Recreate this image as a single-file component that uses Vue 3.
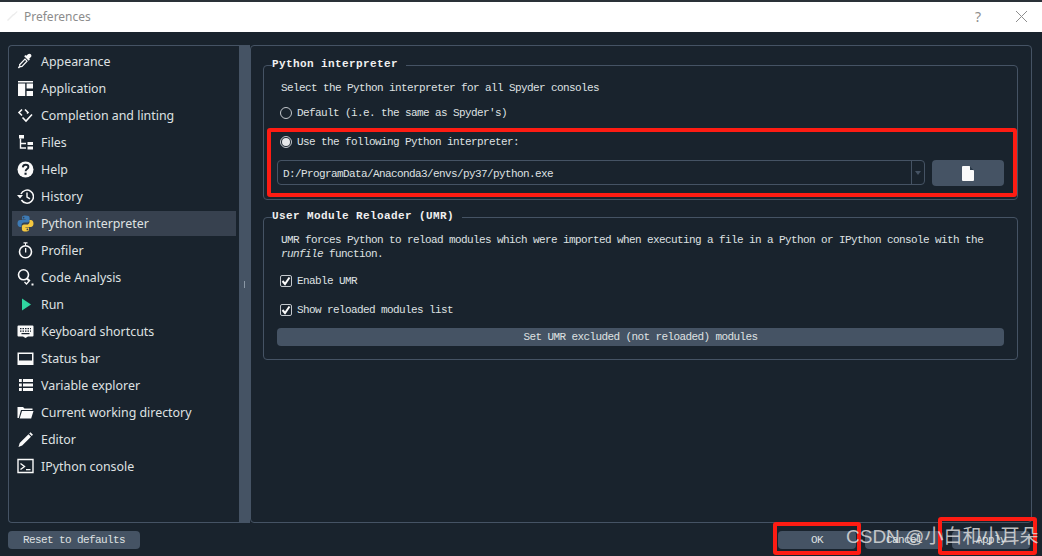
<script setup>
const W = '#fafafa'
const D = '#19232d'
const items = [
  { label: 'Appearance', icon: [
    { d: 'M11 1.200c.8-.8 2-.7 2.800.1s.9 2 .1 2.800l-1.700 1.600.7.8-1.200 1.200-4.500-4.500 1.200-1.200.8.7z', fill: W },
    { d: 'M8 6.200 10 8.200 5 13.400 3 13.800 2.600 11.800z', fill: 'none', stroke: W, sw: 1.2 },
    { d: 'M2.800 13.200 1.400 15', fill: 'none', stroke: W, sw: 1.4 }
  ] },
  { label: 'Application', icon: [
    { d: 'M1 1h15v1.400H1zM1 3.600h7.200V16H1zM9.600 3.600H16v5H9.600zM9.600 11H16v5H9.600z', fill: W }
  ] },
  { label: 'Completion and linting', icon: [
    { d: 'M5 2.500 2 5.500l3 3M8 2.500l3 3-1 1', fill: 'none', stroke: W, sw: 1.600 },
    { d: 'M5.500 10.500 9 14l6-6.500', fill: 'none', stroke: W, sw: 1.600 }
  ] },
  { label: 'Files', icon: [
    { d: 'M2 1h5v3.600H2zM10.500 8h5.500v3H10.500zM10.500 12.500h5.500v3h-5.500z', fill: W },
    { d: 'M3.500 4.500V14H9M3.500 9.500H9', fill: 'none', stroke: W, sw: 1.400 }
  ] },
  { label: 'Help', icon: [
    { d: 'M8.500 .5a8 8 0 1 0 0 16 8 8 0 0 0 0-16z', fill: W },
    { d: 'M5.800 6.300c.2-1.700 1.300-2.500 2.800-2.500s2.800.9 2.800 2.300c0 2-2.800 2-2.800 4.100', fill: 'none', stroke: D, sw: 1.900 },
    { d: 'M7.500 11.700h2.100v2.100H7.500z', fill: D }
  ] },
  { label: 'History', icon: [
    { d: 'M4 6a6.500 6.500 0 1 1 .4 6', fill: 'none', stroke: W, sw: 1.500 },
    { d: 'M0 7.500h6L3 11z', fill: W, tr: 'translate(0 -.5)' },
    { d: 'M10 4.500V9l3 1.800', fill: 'none', stroke: W, sw: 1.400 }
  ] },
  { label: 'Python interpreter', active: true, icon: [
    { d: 'M8.400 .5C5 .5 5 2 5 2.800V4.500h3.600V5H3.200C1.600 5 .5 6.200.5 8.400c0 2.300 1.100 3.500 2.600 3.500h1.400V10c0-1.500 1.200-2.600 2.600-2.600h3.400c1.200 0 2.100-1 2.100-2.200V2.800C12.600 1.300 11.300.5 8.400.5zM6.600 1.700a.8.8 0 1 1 0 1.700.8.8 0 0 1 0-1.700z', fill: '#3d7ab4' },
    { d: 'M8.600 16.500c3.400 0 3.400-1.500 3.400-2.300v-1.700H8.400V12h5.400c1.600 0 2.700-1.200 2.700-3.400 0-2.300-1.100-3.500-2.600-3.500h-1.400V7c0 1.500-1.200 2.600-2.600 2.600H7c-1.200 0-2.100 1-2.100 2.200v2.400c0 1.500 1.300 2.300 3.700 2.300zm1.800-1.200a.8.8 0 1 1 0-1.700.8.8 0 0 1 0 1.700z', fill: '#f5c840' }
  ] },
  { label: 'Profiler', icon: [
    { d: 'M8.500 15.800a6 6 0 1 0 0-12 6 6 0 0 0 0 12z', fill: 'none', stroke: W, sw: 1.600 },
    { d: 'M6.500 .3h4v1.300h-4zM8 1.500h1v2H8zM8 6h1.300v4.500H8z', fill: W }
  ] },
  { label: 'Code Analysis', icon: [
    { d: 'M6.500 .8a5 5 0 1 0 0 10 5 5 0 0 0 0-10z', fill: 'none', stroke: W, sw: 1.600 },
    { d: 'M10 9.500l2 2', fill: 'none', stroke: W, sw: 2 },
    { d: 'M7.500 13l2 2 3.500-4', fill: 'none', stroke: W, sw: 1.300 },
    { d: 'M14.500 14.500h2v2h-2z', fill: W }
  ] },
  { label: 'Run', icon: [
    { d: 'M5 2.500 14 8.500 5 14.500z', fill: '#2fd6a0' }
  ] },
  { label: 'Keyboard shortcuts', icon: [
    { d: 'M1.500 2.500h14a1 1 0 0 1 1 1v9a1 1 0 0 1-1 1H11l-2.500 1.500L6 13.500H1.500a1 1 0 0 1-1-1v-9a1 1 0 0 1 1-1z', fill: W },
    { d: 'M3 5h1.500v1.300H3zM5.500 5H7v1.300H5.500zM8 5h1.500v1.300H8zM10.500 5H12v1.300h-1.500zM13 5h1v1.300h-1zM3 7.500h1.500v1.300H3zM5.500 7.500H7v1.300H5.500zM8 7.500h1.500v1.300H8zM10.500 7.500H12v1.300h-1.500zM13 7.500h1v1.300h-1zM4.500 10h8v1.300h-8z', fill: D }
  ] },
  { label: 'Status bar', icon: [
    { d: 'M.5 2.500h16v12.500H.5zM2 4v6.500h13V4z', fill: W, rule: 'evenodd' }
  ] },
  { label: 'Variable explorer', icon: [
    { d: 'M2 2h2.800v3H2zM6 2h10v3H6zM2 6.500h2.800v3H2zM6 6.500h10v3H6zM2 11h2.800v3H2zM6 11h10v3H6z', fill: W }
  ] },
  { label: 'Current working directory', icon: [
    { d: 'M.5 3h5.500l1.500 1.500h8V6H4L1.800 14H.5z', fill: W },
    { d: 'M5 7h11.500l-2.300 7.500H2.700z', fill: W }
  ] },
  { label: 'Editor', icon: [
    { d: 'M13.500 1.200 16 3.700 14.700 5 12.200 2.500zM11.500 3.200 14 5.700 5.200 14.500 1.500 16 2.700 12z', fill: W }
  ] },
  { label: 'IPython console', icon: [
    { d: 'M1 1.500h15v13H1z', fill: 'none', stroke: W, sw: 1.400 },
    { d: 'M3.500 5.500 7.500 8.500 3.500 11.500', fill: 'none', stroke: W, sw: 1.400 },
    { d: 'M9 11h4.500v1.300H9z', fill: W }
  ] }
]
</script>

<template>
  <div class="window">
    <div class="topline"></div>
    <header class="titlebar">
      <div class="title-left">
        <svg class="title-icon" width="12" height="12" viewBox="0 0 12 12"><path d="M11 1 7 4.500 8 5.500 11.500 2zM7 4 1 10l1 1 6-6z" fill="#ececec" /></svg>
        <span>Preferences</span>
      </div>
      <div class="title-right">
        <span class="help">?</span>
        <svg width="13" height="13" viewBox="0 0 13 13"><path d="M1 1 12 12M12 1 1 12" stroke="#8e8e8e" stroke-width="1" fill="none" /></svg>
      </div>
    </header>

    <div class="main">
      <nav class="sidebar">
        <div v-for="item in items" :key="item.label" class="row" :class="{ active: item.active }">
          <svg class="row-icon" width="17" height="17" viewBox="0 0 17 17">
            <path
              v-for="(p, i) in item.icon"
              :key="i"
              :d="p.d"
              :fill="p.fill"
              :fill-rule="p.rule"
              :stroke="p.stroke"
              :stroke-width="p.sw"
              :transform="p.tr"
            />
          </svg>
          <span class="row-label">{{ item.label }}</span>
        </div>
      </nav>

      <div class="splitter"><i></i></div>

      <section class="panel">
        <fieldset class="group group-one">
          <legend>Python interpreter</legend>
          <p class="desc">Select the Python interpreter for all Spyder consoles</p>
          <label class="opt first"><span class="radio"></span>Default (i.e. the same as Spyder's)</label>
          <label class="opt second"><span class="radio on"></span>Use the following Python interpreter:</label>
          <div class="combo-row">
            <div class="combo">
              <span class="combo-text">D:/ProgramData/Anaconda3/envs/py37/python.exe</span>
              <span class="combo-arrow"><i></i></span>
            </div>
            <button class="btn file-btn">
              <svg width="12" height="15" viewBox="0 0 12 15"><path d="M1 0h6.500L12 4.500V14a1 1 0 0 1-1 1H1a1 1 0 0 1-1-1V1a1 1 0 0 1 1-1z" fill="#fafafa" /><path d="M8 0 12 4H8z" fill="#2b3a4a" /></svg>
            </button>
          </div>
        </fieldset>

        <fieldset class="group group-two">
          <legend>User Module Reloader (UMR)</legend>
          <p class="desc umr">UMR forces Python to reload modules which were imported when executing a file in a Python or IPython console with the<br /><em>runfile</em> function.</p>
          <label class="opt check-first"><span class="check">
            <svg width="10" height="10" viewBox="0 0 10 10"><path d="M1.500 5 4 8 8.500 1.500" fill="none" stroke="#fafafa" stroke-width="2" /></svg>
          </span>Enable UMR</label>
          <label class="opt check-second"><span class="check">
            <svg width="10" height="10" viewBox="0 0 10 10"><path d="M1.500 5 4 8 8.500 1.500" fill="none" stroke="#fafafa" stroke-width="2" /></svg>
          </span>Show reloaded modules list</label>
          <button class="btn wide-btn">Set UMR excluded (not reloaded) modules</button>
        </fieldset>
      </section>
    </div>

    <footer class="footer">
      <button class="btn reset">Reset to defaults</button>
      <div class="actions">
        <button class="btn action">OK</button>
        <button class="btn action">Cancel</button>
        <button class="btn action">Apply</button>
      </div>
    </footer>

    <div class="mark mark-interp"></div>
    <div class="mark mark-ok"></div>
    <div class="mark mark-apply"></div>
    <div class="watermark">CSDN @小白和小耳朵</div>
  </div>
</template>

<style>
html, body { margin: 0; background: #19232d; }
</style>

<style scoped>
.window {
  position: relative;
  width: 1042px;
  height: 556px;
  overflow: hidden;
  background: #19232d;
  display: flex;
  flex-direction: column;
  font-family: "Liberation Mono", monospace;
}
.topline { height: 2px; background: #2a3138; }
.titlebar {
  height: 30px;
  box-sizing: border-box;
  padding: 0 14px 2px 6px;
  background: #fff;
  display: flex;
  align-items: center;
  justify-content: space-between;
  font: 12px "Noto Sans", sans-serif;
  color: #8c8c8c;
}
.title-left { display: flex; align-items: center; gap: 6px; }
.title-right { display: flex; align-items: center; gap: 34px; }
.help { font-size: 14px; color: #8e8e8e; }
.main {
  display: flex;
  height: 478px;
  margin: 13px 10px 0 8px;
}
.sidebar {
  width: 231px;
  box-sizing: border-box;
  border: 1px solid #455364;
  border-right: 0;
  border-radius: 4px 0 0 4px;
  padding: 3px 3px 0;
  display: flex;
  flex-direction: column;
  gap: 2px;
}
.row {
  height: 25px;
  flex: none;
  box-sizing: border-box;
  padding-left: 5px;
  display: flex;
  align-items: center;
  gap: 7px;
  font: 12.400px/17px "Noto Sans", sans-serif;
  color: #dfe1e2;
}
.row.active { background: #37414f; }
.row-icon { flex: none; }
.splitter {
  width: 11px;
  background: #455364;
  display: flex;
  align-items: center;
  justify-content: center;
}
.splitter i { width: 1px; height: 7px; background: #8a97a5; }
.panel {
  flex: 1;
  box-sizing: border-box;
  border: 1px solid #455364;
  border-radius: 4px;
  padding: 11px 13px 0 12px;
  display: flex;
  flex-direction: column;
  gap: 9px;
}
.group {
  margin: 0;
  border: 1px solid #455364;
  border-radius: 4px;
  padding: 0 13px;
  min-width: 0;
  box-sizing: border-box;
}
.group-one { height: 143px; }
.group-two { height: 151px; }
legend {
  padding: 0 8px 3px 0;
  margin-left: -5px;
  color: #f0f0f0;
  font-size: 11px;
  font-weight: 700;
  line-height: 14px;
  letter-spacing: .4px;
}
.desc {
  margin: 7px 0 0 4px;
  font-size: 11px;
  letter-spacing: -.6px;
  line-height: 14px;
  color: #dfe1e2;
}
.desc em { font-style: italic; }
.opt {
  display: flex;
  align-items: center;
  gap: 5px;
  margin-left: 3px;
  height: 14px;
  font-size: 11px;
  letter-spacing: -.6px;
  color: #dfe1e2;
}
.first { margin-top: 11px; }
.second { margin-top: 15px; }
.check-first { margin-top: 13px; }
.check-second { margin-top: 15px; }
.radio {
  width: 10px;
  height: 10px;
  border: 1px solid #c3c8cd;
  border-radius: 50%;
  display: flex;
  align-items: center;
  justify-content: center;
  flex: none;
}
.radio.on::before {
  content: "";
  width: 8px;
  height: 8px;
  border-radius: 50%;
  background: #e6e8ea;
}
.check {
  width: 10px;
  height: 10px;
  border: 1px solid #c3c8cd;
  border-radius: 2px;
  display: flex;
  align-items: center;
  justify-content: center;
  flex: none;
}
.combo-row {
  display: flex;
  gap: 7px;
  margin-top: 11px;
}
.combo {
  width: 648px;
  height: 25px;
  box-sizing: border-box;
  border: 1px solid #455364;
  border-radius: 4px;
  display: flex;
  align-items: center;
  justify-content: space-between;
  padding-left: 5px;
  font-size: 11px;
  letter-spacing: -.6px;
  color: #dfe1e2;
}
.combo-text { padding-top: 2px; }
.combo-arrow {
  width: 12px;
  height: 100%;
  border-left: 1px solid #455364;
  display: flex;
  align-items: center;
  justify-content: center;
}
.combo-arrow i {
  width: 0;
  height: 0;
  border: 3px solid transparent;
  border-top: 4px solid #455364;
  border-bottom: 0;
}
.btn {
  border: 0;
  border-radius: 4px;
  background: #455364;
  color: #dfe1e2;
  font-family: "Liberation Mono", monospace;
  font-size: 11px;
  letter-spacing: -.6px;
  padding: 0;
  display: flex;
  align-items: center;
  justify-content: center;
}
.file-btn { width: 72px; height: 26px; }
.wide-btn { width: 727px; height: 18px; margin-top: 11px; }
.footer {
  display: flex;
  justify-content: space-between;
  align-items: center;
  margin: 8px 12px 0 8px;
  height: 18px;
}
.reset { width: 132px; height: 18px; }
.actions { display: flex; gap: 9px; }
.action { width: 78px; height: 18px; }
.mark {
  position: absolute;
  box-sizing: border-box;
  border: 4px solid #fe1c13;
  border-radius: 3px;
}
.mark-interp { left: 267px; top: 128px; width: 750px; height: 69px; }
.mark-ok { left: 773px; top: 522px; width: 88px; height: 33px; }
.mark-apply { left: 938px; top: 517px; width: 99px; height: 38px; }
.watermark {
  position: absolute;
  left: 846px;
  top: 524px;
  font: 19px/26px "Liberation Sans", "Noto Sans CJK SC", sans-serif;
  color: rgba(225, 225, 225, .82);
  white-space: nowrap;
}
</style>
